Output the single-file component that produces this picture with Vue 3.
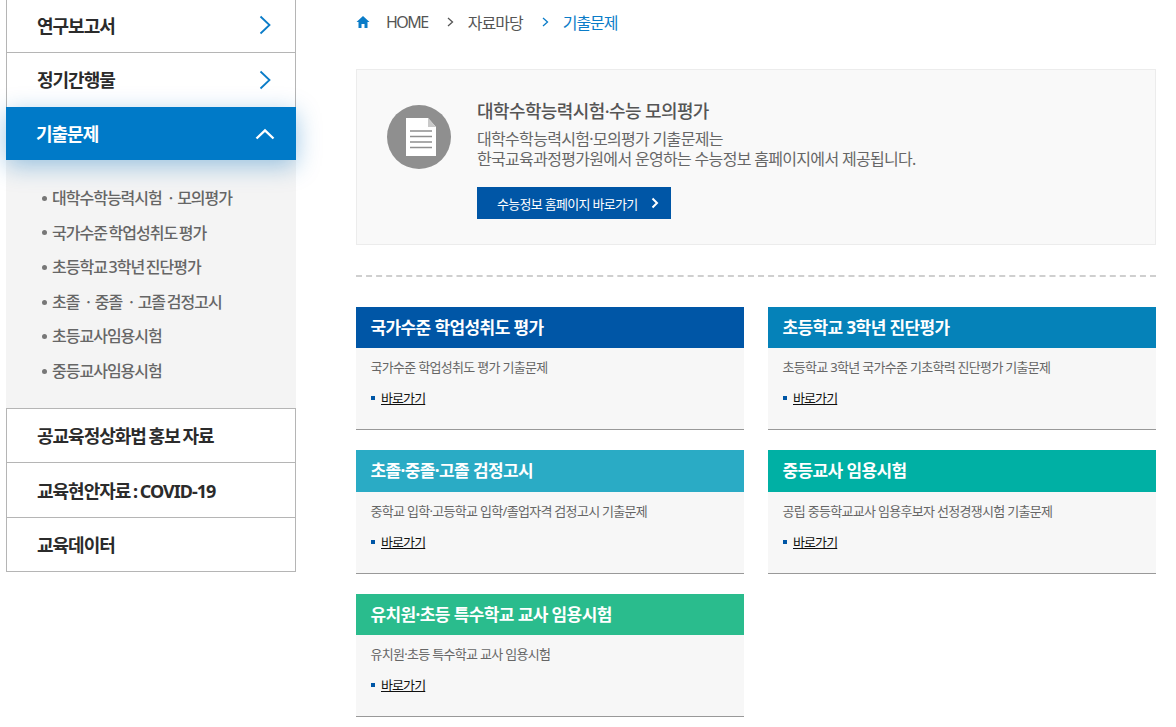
<script setup>
const topMenu = ['연구보고서', '정기간행물']
const subMenu = [
  '대학수학능력시험 ㆍ모의평가',
  '국가수준 학업성취도 평가',
  '초등학교 3학년 진단평가',
  '초졸 ㆍ중졸 ㆍ고졸 검정고시',
  '초등교사임용시험',
  '중등교사임용시험',
]
const bottomMenu = ['공교육정상화법 홍보 자료', '교육현안자료 : COVID-19', '교육데이터']
const cards = [
  { title: '국가수준 학업성취도 평가', desc: '국가수준 학업성취도 평가 기출문제', color: '#0056a6' },
  { title: '초등학교 3학년 진단평가', desc: '초등학교 3학년 국가수준 기초학력 진단평가 기출문제', color: '#0582b9' },
  { title: '초졸·중졸·고졸 검정고시', desc: '중학교 입학·고등학교 입학/졸업자격 검정고시 기출문제', color: '#2aabc5' },
  { title: '중등교사 임용시험', desc: '공립 중등학교교사 임용후보자 선정경쟁시험 기출문제', color: '#00b0a4' },
  { title: '유치원·초등 특수학교 교사 임용시험', desc: '유치원·초등 특수학교 교사 임용시험', color: '#2abc8d' },
]
</script>

<template>
  <div class="page">
    <aside class="side">
      <ul class="menu first">
        <li v-for="m in topMenu" :key="m" class="item">
          <span>{{ m }}</span>
          <svg class="chev" width="12" height="20" viewBox="0 0 12 20"><path d="M1.500 1.500 10.500 10 1.500 18.500" fill="none" stroke="#0a7cc8" stroke-width="1.800" /></svg>
        </li>
      </ul>
      <div class="active">
        <span>기출문제</span>
        <svg width="20" height="12" viewBox="0 0 20 12"><path d="M1.500 10.500 10 2.500 18.500 10.500" fill="none" stroke="#fff" stroke-width="2.400" /></svg>
      </div>
      <ul class="sub">
        <li v-for="s in subMenu" :key="s">{{ s }}</li>
      </ul>
      <ul class="menu">
        <li v-for="m in bottomMenu" :key="m" class="item"><span>{{ m }}</span></li>
      </ul>
    </aside>

    <main class="main">
      <div class="crumbs">
        <svg class="home" width="14" height="12" viewBox="0 0 14 12"><path d="M7 0 0.500 6H2.500V12H5.500V8H8.500V12H11.500V6H13.500Z" fill="#0a7cc8" /></svg>
        <span class="c-home">HOME</span>
        <svg class="sep" width="7" height="10" viewBox="0 0 7 10"><path d="M1 1 5.500 5 1 9" fill="none" stroke="#555" stroke-width="1.300" /></svg>
        <span class="c-text">자료마당</span>
        <svg class="sep" width="7" height="10" viewBox="0 0 7 10"><path d="M1 1 5.500 5 1 9" fill="none" stroke="#0a7cc8" stroke-width="1.300" /></svg>
        <span class="c-text now">기출문제</span>
      </div>

      <section class="intro">
        <div class="doc">
          <svg width="30" height="38" viewBox="0 0 30 38">
            <path d="M0 0H22L30 9V38H0Z" fill="#fff" />
            <path d="M22 0 30 9H22Z" fill="#c9c9c9" />
            <path d="M4 13H26M4 18.500H26M4 24H26M4 29.500H26" stroke="#8f8f8f" stroke-width="1.500" />
          </svg>
        </div>
        <div class="intro-body">
          <h2>대학수학능력시험·수능 모의평가</h2>
          <p>대학수학능력시험·모의평가 기출문제는<br />한국교육과정평가원에서 운영하는 수능정보 홈페이지에서 제공됩니다.</p>
          <a class="go">
            <span>수능정보 홈페이지 바로가기</span>
            <svg width="8" height="12" viewBox="0 0 8 12"><path d="M1.500 1.500 6 6 1.500 10.500" fill="none" stroke="#fff" stroke-width="2" /></svg>
          </a>
        </div>
      </section>

      <div class="dash"></div>

      <div class="grid">
        <article v-for="c in cards" :key="c.title" class="card">
          <h3 :style="{ background: c.color }">{{ c.title }}</h3>
          <div class="card-body">
            <p>{{ c.desc }}</p>
            <a class="link"><i></i><u>바로가기</u></a>
          </div>
        </article>
      </div>
    </main>
  </div>
</template>

<style scoped>
.page {
  width: 1176px;
  height: 727px;
  overflow: hidden;
  display: flex;
  align-items: flex-start;
  font-family: "Noto Sans", "Noto Sans CJK KR", sans-serif;
  background: #fff;
  letter-spacing: -0.5px;
}
ul { list-style: none; margin: 0; padding: 0; }
h2, h3, p { margin: 0; }

.side {
  width: 290px;
  margin-left: 6px;
  margin-top: -3px;
  flex: none;
}
.menu {
  border: 1px solid #b5b5b5;
}
.menu.first { border-bottom: 0; }
.item {
  height: 53.500px;
  padding: 0 24px 0 30px;
  display: flex;
  align-items: center;
  justify-content: space-between;
  font-size: 18px;
  font-weight: 700;
  letter-spacing: -1px;
  word-spacing: -1px;
  color: #2b2b2b;
}
.first .item { height: 54px; }
.first .item + .item span { margin-bottom: 2px; }
.item + .item { border-top: 1px solid #b5b5b5; }
.active {
  position: relative;
  height: 53px;
  padding: 0 21px 0 30px;
  display: flex;
  align-items: center;
  justify-content: space-between;
  background: #007ac8;
  color: #fff;
  font-size: 18px;
  font-weight: 700;
  letter-spacing: -1px;
  box-shadow: 0 6px 24px rgba(0, 110, 190, 0.38);
}
.active span { margin-bottom: 2px; }
.sub {
  background: #f4f4f4;
  padding: 21px 0 19px 36px;
}
.sub li {
  height: 34.600px;
  line-height: 34.600px;
  font-size: 16px;
  font-weight: 500;
  color: #666;
  letter-spacing: -1px;
  word-spacing: -1.500px;
  display: flex;
  align-items: center;
  gap: 5px;
}
.sub li::before {
  content: '';
  width: 5px;
  height: 5px;
  border-radius: 50%;
  background: #777;
  flex: none;
}

.main {
  width: 800px;
  margin-left: 60px;
  flex: none;
}
.crumbs {
  height: 44px;
  display: flex;
  align-items: center;
  font-size: 16px;
  letter-spacing: -1px;
  color: #555;
}
.c-home { margin-left: 16px; letter-spacing: -1.500px; }
.sep { margin: 0 14px 0 19px; }
.c-text { color: #555; }
.c-text.now { color: #0a7cc8; }

.intro {
  margin-top: 25px;
  height: 176px;
  box-sizing: border-box;
  border: 1px solid #ececec;
  background: #f9f9f9;
  display: flex;
  padding: 35px 0 0 30px;
}
.doc {
  width: 64px;
  height: 64px;
  padding-left: 3px;
  box-sizing: border-box;
  border-radius: 50%;
  background: #8f8f8f;
  display: flex;
  align-items: center;
  justify-content: center;
  flex: none;
}
.intro-body { margin-left: 26px; margin-top: -7px; }
.intro-body h2 {
  font-size: 18px;
  font-weight: 500;
  line-height: 26px;
  letter-spacing: -0.6px;
  color: #555;
}
.intro-body p {
  margin-top: 5px;
  font-size: 16px;
  line-height: 20px;
  letter-spacing: -0.680px;
  color: #666;
}
.go {
  margin-top: 18px;
  width: 194px;
  height: 32px;
  box-sizing: border-box;
  padding: 0 12px 0 20px;
  background: #0056a6;
  color: #fff;
  font-size: 13px;
  letter-spacing: -0.7px;
  display: flex;
  align-items: center;
  justify-content: space-between;
}

.dash {
  margin-top: 30px;
  border-top: 2px dashed #cfcfcf;
}
.grid {
  margin-top: 30px;
  display: grid;
  grid-template-columns: 388px 388px;
  grid-template-rows: 123px 124px 123px;
  column-gap: 24px;
  row-gap: 20px;
}
.card {
  box-sizing: border-box;
  background: #f7f7f7;
  border-bottom: 1px solid #999;
}
.card h3 {
  height: 41px;
  line-height: 41px;
  padding-left: 14.500px;
  color: #fff;
  font-size: 17px;
  font-weight: 700;
  letter-spacing: -0.6px;
}
.card:nth-child(3) h3, .card:nth-child(4) h3 { height: 42px; }
.card-body { padding: 9px 15px 0 14.500px; }
.card-body p {
  font-size: 13px;
  line-height: 20px;
  letter-spacing: -0.7px;
  color: #666;
}
.link {
  margin-top: 11px;
  display: flex;
  align-items: center;
  gap: 6.500px;
  font-size: 13px;
  line-height: 20px;
  letter-spacing: -0.9px;
  color: #111;
}
.link i {
  width: 4px;
  height: 4px;
  background: #0056a6;
}
</style>

<style>
html, body { margin: 0; background: #fff; }
</style>
